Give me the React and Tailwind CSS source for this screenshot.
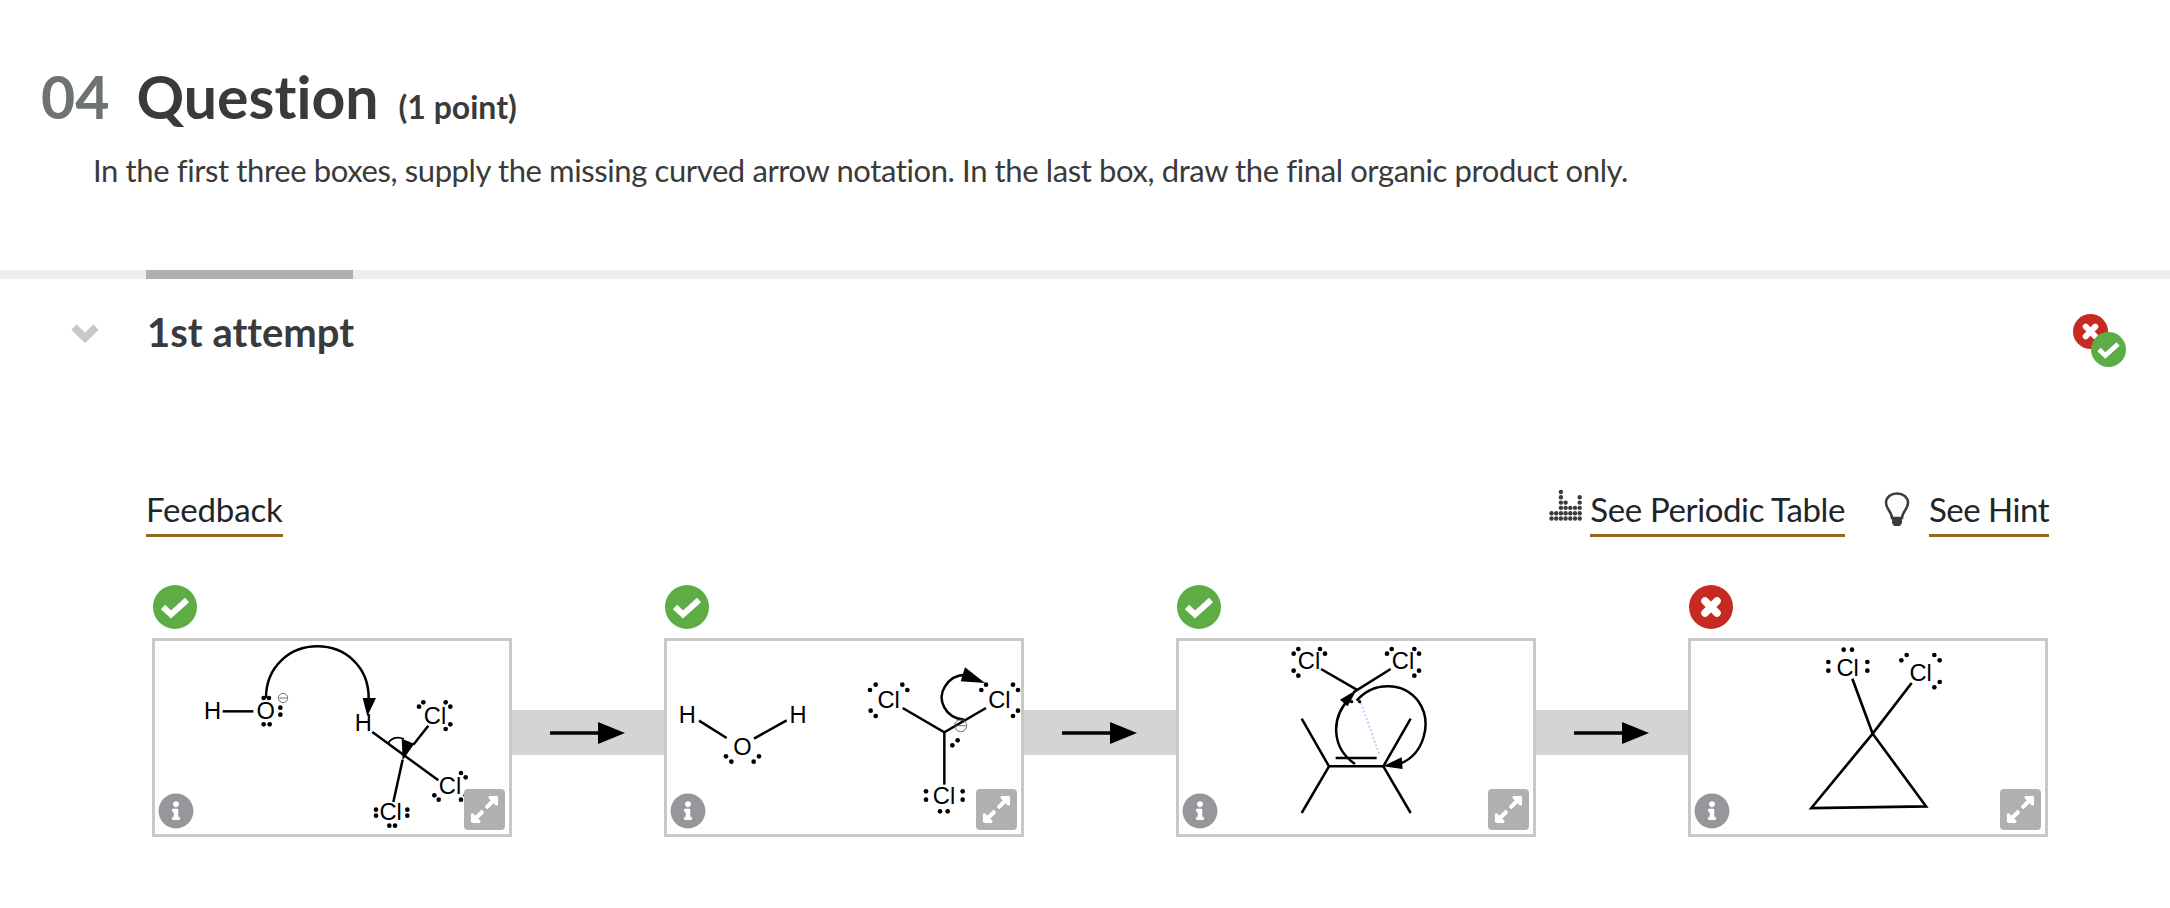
import React from "react";
import { FaInfoCircle, FaExpandAlt } from "react-icons/fa";

function CheckBadge({ size = 44 }) {
  return (
    <svg width={size} height={size} viewBox="0 0 44 44" className="block">
      <circle cx="22" cy="22" r="22" fill="#5cad46" />
      <path d="M10 22 L18 29.5 L34 15" fill="none" stroke="#fff" strokeWidth="6" />
    </svg>
  );
}

function CrossBadge({ size = 44 }) {
  return (
    <svg width={size} height={size} viewBox="0 0 44 44" className="block">
      <circle cx="22" cy="22" r="22" fill="#c62a21" />
      <path d="M16 16 L28 28 M28 16 L16 28" fill="none" stroke="#fff" strokeWidth="7.5" strokeLinecap="round" />
    </svg>
  );
}

function Dots({ points }) {
  return points.map(([x, y], i) => <circle key={i} cx={x} cy={y} r="7" fill="#000" />);
}

function Label({ x, y, children }) {
  return (
    <text x={x} y={y} textAnchor="middle" fontSize="71" fontFamily="'Liberation Sans', sans-serif" fill="#000">
      {children}
    </text>
  );
}

function Charge({ x, y, r }) {
  return (
    <g fill="none" stroke="#555" strokeWidth="2.5">
      <circle cx={x} cy={y} r={r} />
      <path d={`M${x - r + 3} ${y} H${x + r - 3}`} />
    </g>
  );
}

function Structure1() {
  return (
    <svg viewBox="66 205 1080 597" className="w-full h-full block">
      <g fill="none" stroke="#000" strokeWidth="7.5">
        <path d="M278 425 H370" />
        <path d="M727 487 L925 632" />
        <path d="M818 570 L790 697" />
        <path d="M850 525 L895 468" />
        <path d="M775 520 C785 503 805 500 822 508" strokeWidth="5" />
        <path d="M408 385 C408 290 480 230 562 230 C645 230 716 290 716 385" />
      </g>
      <path d="M818 572 L815 507 L853 522 Z" fill="#000" />
      <path d="M698 385 L738 385 L712 440 Z" fill="#000" />
      <Label x={248} y={447}>H</Label>
      <Label x={407} y={447}>O</Label>
      <Label x={700} y={483}>H</Label>
      <Label x={915} y={462}>Cl</Label>
      <Label x={960} y={672}>Cl</Label>
      <Label x={782} y={750}>Cl</Label>
      <Charge x={459} y={385} r={14} />
      <Dots
        points={[
          [401, 385], [417, 385], [451, 414], [451, 435], [401, 464], [419, 464],
          [880, 398], [867, 411], [947, 398], [961, 411], [961, 464], [947, 478],
          [993, 610], [1007, 623], [913, 677], [926, 690], [993, 690], [1007, 677],
          [738, 720], [738, 738], [832, 720], [832, 738], [778, 768], [795, 768],
        ]}
      />
    </svg>
  );
}

function Structure2() {
  return (
    <svg viewBox="42 205 1080 597" className="w-full h-full block">
      <g fill="none" stroke="#000" strokeWidth="7.5">
        <path d="M147 453 L230 505" />
        <path d="M312 507 L410 452" />
        <path d="M758 415 L883 488 L1008 415" />
        <path d="M883 488 V645" />
        <path d="M942 450 C885 445 860 390 885 350 C898 328 920 316 945 315" />
      </g>
      <path d="M945 293 L1005 340 L932 335 Z" fill="#000" />
      <Label x={112} y={460}>H</Label>
      <Label x={444} y={460}>H</Label>
      <Label x={277} y={555}>O</Label>
      <Label x={716} y={415}>Cl</Label>
      <Label x={1048} y={415}>Cl</Label>
      <Label x={882} y={702}>Cl</Label>
      <Charge x={932} y={468} r={18} />
      <Dots
        points={[
          [228, 560], [244, 576], [327, 560], [311, 576],
          [677, 345], [660, 361], [757, 345], [772, 361], [662, 423], [677, 439],
          [1008, 345], [994, 361], [1089, 345], [1104, 361], [1104, 423], [1089, 439],
          [923, 512], [907, 527],
          [828, 665], [828, 690], [938, 665], [938, 690], [870, 725], [893, 725],
        ]}
      />
    </svg>
  );
}

function Structure3() {
  return (
    <svg viewBox="48 205 1080 597" className="w-full h-full block">
      <path d="M603 400 L658 555" fill="none" stroke="#c8c8ff" strokeWidth="6" strokeDasharray="6 6" />
      <g fill="none" stroke="#000" strokeWidth="7.5">
        <path d="M483 298 L590 360" />
        <path d="M692 298 L580 368" />
        <path d="M425 447 L507 590 H670 L752 447" />
        <path d="M507 590 L425 730" />
        <path d="M670 590 L752 730" />
        <path d="M527 565 H650" />
        <path d="M585 583 C515 535 510 445 570 385" />
        <path d="M590 393 C640 335 730 335 775 395 C820 460 790 555 720 582" />
      </g>
      <path d="M590 360 L540 390 L563 410 Z" fill="#000" />
      <path d="M668 590 L725 563 L728 598 Z" fill="#000" />
      <Label x={447} y={299}>Cl</Label>
      <Label x={729} y={299}>Cl</Label>
      <Dots
        points={[
          [415, 238], [401, 252], [480, 238], [495, 252], [401, 303], [415, 318],
          [695, 238], [681, 252], [763, 238], [777, 252], [777, 303], [763, 318],
        ]}
      />
      <circle cx="575" cy="396" r="5" fill="#000" />
      <circle cx="599" cy="396" r="5" fill="#000" />
    </svg>
  );
}

function Structure4() {
  return (
    <svg viewBox="54 205 1080 597" className="w-full h-full block">
      <g fill="none" stroke="#000" strokeWidth="8">
        <path d="M547 327 L608 492 L768 710 L424 715 L608 492 L725 340" strokeLinejoin="miter" />
      </g>
      <Label x={533} y={318}>Cl</Label>
      <Label x={752} y={333}>Cl</Label>
      <Dots
        points={[
          [475, 277], [475, 303], [592, 277], [592, 303], [521, 240], [546, 240],
          [710, 256], [694, 272], [793, 256], [809, 272], [809, 337], [793, 353],
        ]}
      />
    </svg>
  );
}

function StepBox({ correct, children }) {
  return (
    <div className="w-[360px] shrink-0">
      <div className="h-[44px] mb-[9px] pl-px">{correct ? <CheckBadge /> : <CrossBadge />}</div>
      <div className="relative h-[199px] border-[3px] border-[#c8c8c8] bg-white">
        <div className="absolute -inset-[3px]">{children}</div>
        <FaInfoCircle className="absolute left-[3px] bottom-[5px] w-[36px] h-[36px] text-[#96979b]" />
        <div className="absolute right-[4px] bottom-[4px] w-[41px] h-[41px] rounded bg-[#b0b0b0] flex items-center justify-center">
          <FaExpandAlt className="w-[31px] h-[31px] text-white" />
        </div>
      </div>
    </div>
  );
}

function Connector() {
  return (
    <div className="flex-1 h-[45px] mt-[125px] bg-[#d4d4d4] flex items-center justify-center">
      <svg width="76" height="24" viewBox="0 0 76 24">
        <path d="M1 12 H50" stroke="#000" strokeWidth="3.5" strokeLinecap="round" />
        <path d="M48 1 L75 12 L48 23 Z" fill="#000" />
      </svg>
    </div>
  );
}

function PeriodicIcon() {
  const cols = [2, 2, 6, 4, 3, 3, 5];
  return (
    <svg width="33" height="32" viewBox="0 0 33 32" className="block mb-[16px]">
      {cols.map((n, c) =>
        Array.from({ length: n }).map((_, r) => (
          <circle key={`${c}-${r}`} cx={2.5 + c * 4.7} cy={29.5 - r * 5.3} r="2.2" fill="#3c3c3c" />
        ))
      )}
    </svg>
  );
}

function BulbIcon() {
  return (
    <svg width="26" height="35" viewBox="0 0 26 35" className="block">
      <path d="M8 26 C8 20 2 17 2 11 C2 5 7 1.5 13 1.5 C19 1.5 24 5 24 11 C24 17 18 20 18 26 Z" fill="none" stroke="#3c3c3c" strokeWidth="2.5" />
      <path d="M8 26 H18 V31 L16 34 H10 L8 31 Z" fill="#3c3c3c" />
    </svg>
  );
}

export default function App() {
  return (
    <div className="w-[2170px] h-[908px] bg-white overflow-hidden font-['Lato',sans-serif] text-[#3a3a3a]">
      <div className="flex items-baseline pl-[41px] pt-[58px] leading-[78px] [font-variant-ligatures:none]">
        <span className="text-[59px] font-bold text-[#6d7272] mr-[27px]">04</span>
        <span className="text-[59px] font-bold mr-[20px]">Question</span>
        <span className="text-[32px] font-bold">(1 point)</span>
      </div>
      <p className="pl-[93px] mt-[2px] text-[31px] tracking-[-0.39px] leading-[44px]">
        In the first three boxes, supply the missing curved arrow notation. In the last box, draw the final organic product only.
      </p>

      <div className="mt-[78px] h-[9px] bg-[#eeeeee]">
        <div className="ml-[146px] w-[207px] h-full bg-[#b0b0b0]" />
      </div>

      <div className="flex items-center h-[108px] -mt-[10px] pt-[18px]">
        <svg width="28" height="20" viewBox="0 0 28 20" className="ml-[71px] block mt-[2px]">
          <path d="M3 4 L14 15 L25 4" fill="none" stroke="#c8c8c8" strokeWidth="7.5" />
        </svg>
        <span className="ml-[48px] text-[40px] font-bold [font-variant-ligatures:none]">1st attempt</span>
        <div className="relative ml-auto mr-[44px] mt-[16px] w-[53px] h-[52px]">
          <div className="absolute left-0 top-0"><CrossBadge size={35} /></div>
          <div className="absolute left-[18px] top-[18px]"><CheckBadge size={35} /></div>
        </div>
      </div>

      <div className="flex justify-between items-end mt-[110px] pl-[146px] pr-[121px] text-[#212529] text-[33px] leading-[44px]">
        <span className="border-b-[3px] pb-[3px] border-[#94691f] tracking-[-0.17px]">Feedback</span>
        <div className="flex items-end">
          <PeriodicIcon />
          <span className="ml-[8px] border-b-[3px] pb-[3px] border-[#94691f] tracking-[-0.38px]">See Periodic Table</span>
          <div className="ml-[39px] mb-[10px]"><BulbIcon /></div>
          <span className="ml-[19px] border-b-[3px] pb-[3px] border-[#94691f] tracking-[-0.5px]">See Hint</span>
        </div>
      </div>

      <div className="flex mt-[48px] pl-[152px] pr-[122px]">
        <StepBox correct><Structure1 /></StepBox>
        <Connector />
        <StepBox correct><Structure2 /></StepBox>
        <Connector />
        <StepBox correct><Structure3 /></StepBox>
        <Connector />
        <StepBox><Structure4 /></StepBox>
      </div>
    </div>
  );
}
